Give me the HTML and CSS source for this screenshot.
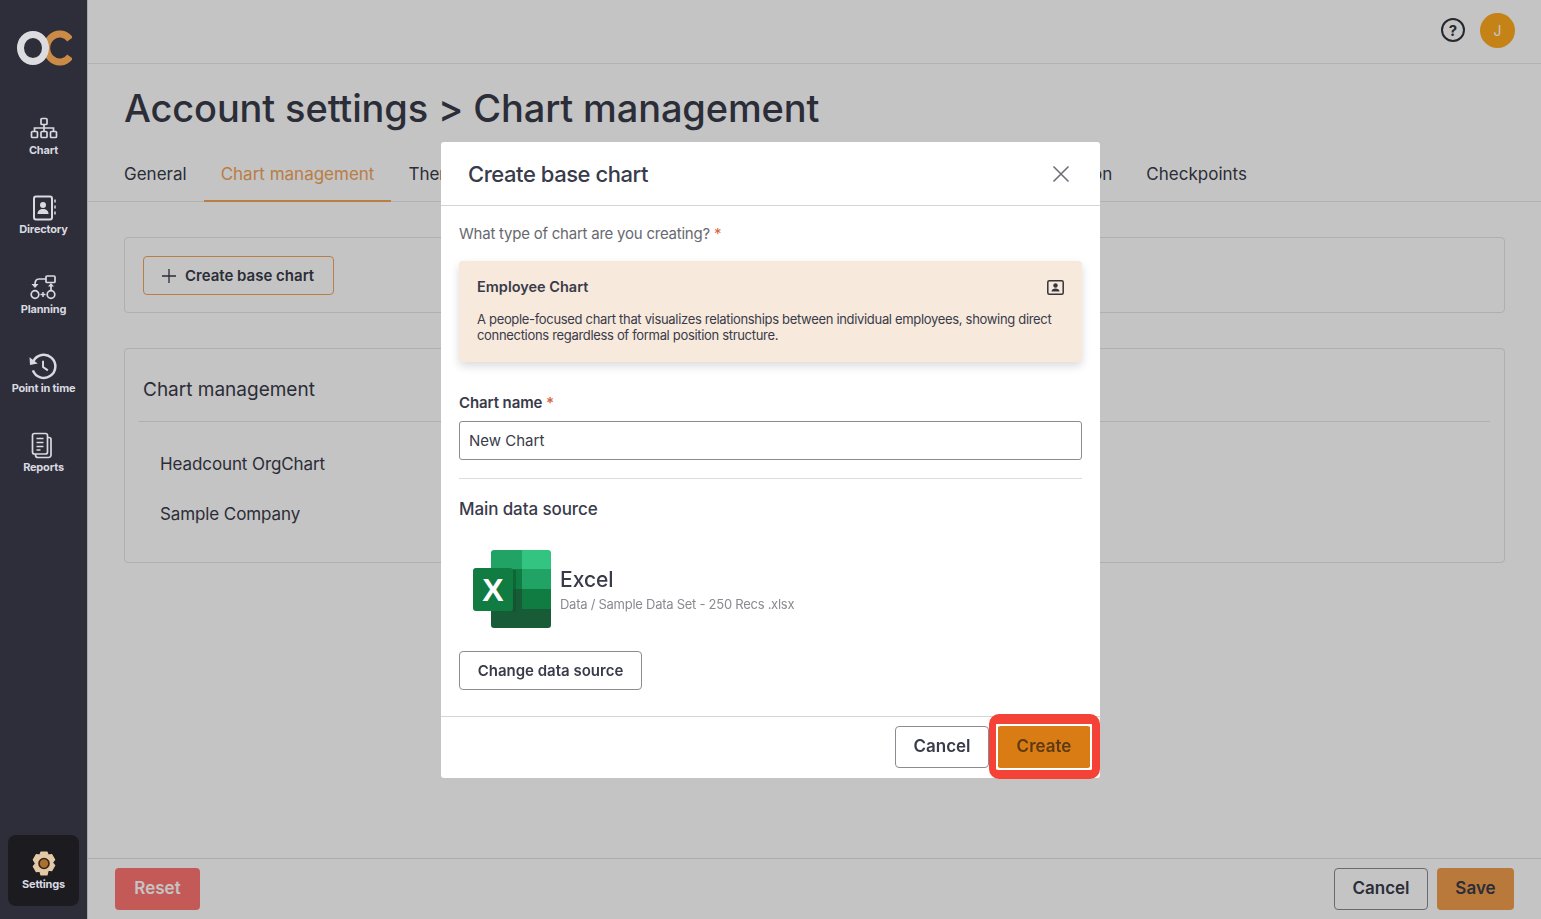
FILE: index.html
```html
<!DOCTYPE html>
<html lang="en">
<head>
    <meta charset="UTF-8">
    <meta name="viewport" content="width=device-width, initial-scale=1.0">
    <title>Chart management</title>
    <link rel="stylesheet" href="styles.css">
</head>
<body>

    <aside class="sidebar">
        <svg class="logo" width="56" height="36" viewBox="0 0 56 36">
            <path d="M54 9.500A13 14 0 1 0 54 26.500" fill="none" stroke="#c98b45" stroke-width="7"/>
            <ellipse cx="17" cy="18" rx="12.500" ry="13.500" fill="none" stroke="#dcdce0" stroke-width="7"/>
        </svg>

        <nav class="nav">
            <a class="nav-item">
                <svg width="28" height="24" viewBox="0 0 28 24" fill="none" stroke="currentColor" stroke-width="1.700">
                    <rect x="11" y="2" width="6" height="6" rx="1"/>
                    <rect x="1.500" y="15" width="6" height="6" rx="1"/>
                    <rect x="11" y="15" width="6" height="6" rx="1"/>
                    <rect x="20.500" y="15" width="6" height="6" rx="1"/>
                    <path d="M14 8v7M4.500 15v-3.500h19V15"/>
                </svg>
                <span>Chart</span>
            </a>
            <a class="nav-item">
                <svg width="28" height="26" viewBox="0 0 28 26" fill="none" stroke="currentColor" stroke-width="2">
                    <rect x="4" y="2" width="18" height="23" rx="2"/>
                    <circle cx="13" cy="10.500" r="3" fill="currentColor" stroke="none"/>
                    <path d="M7.500 19.500c0-3.500 2.500-5 5.500-5s5.500 1.500 5.500 5z" fill="currentColor" stroke="none"/>
                    <path d="M25 5v3M25 11v3M25 17v3" stroke-width="1.500"/>
                </svg>
                <span>Directory</span>
            </a>
            <a class="nav-item">
                <svg width="28" height="26" viewBox="0 0 28 26" fill="none" stroke="currentColor" stroke-width="1.700">
                    <rect x="16" y="1.500" width="9" height="6.500" rx="1"/>
                    <path d="M16 4.500H9C6 4.500 5 7 5 10"/>
                    <path d="M1.500 9.500 5 13.500 8.500 9.500z" fill="currentColor" stroke="none"/>
                    <circle cx="5" cy="20" r="3.800"/>
                    <circle cx="21" cy="20" r="3.800"/>
                    <path d="M10.500 20h5M13 17.500v5" stroke-width="1.500"/>
                    <path d="M21 16v-5"/>
                    <path d="M18 12l3-3.500 3 3.500z" fill="currentColor" stroke="none"/>
                </svg>
                <span>Planning</span>
            </a>
            <a class="nav-item">
                <svg width="30" height="28" viewBox="2 0 30 28" fill="none" stroke="currentColor" stroke-width="2.600">
                    <path d="M6 8.500A12 12 0 1 1 5.500 18"/>
                    <path d="M2 4.500 2.500 12.500 10.500 11z" fill="currentColor" stroke="none"/>
                    <path d="M16 8v6.500l5 3.500" stroke-width="2"/>
                </svg>
                <span>Point in time</span>
            </a>
            <a class="nav-item">
                <svg width="28" height="27" viewBox="2.500 0 28 27" fill="none" stroke="currentColor" stroke-width="1.700">
                    <path d="M5 3.500A2 2 0 0 1 7 1.500h11a2 2 0 0 1 2 2V20a2 2 0 0 1-2 2H7a2 2 0 0 1-2-2z"/>
                    <path d="M9 6.500h7M9 10.500h7M9 14.500h7M9 18h4"/>
                    <path d="M20 5.500h1.500a2 2 0 0 1 2 2V23a2.500 2.500 0 0 1-2.500 2.500H10.500A2.500 2.500 0 0 1 8 23v-1"/>
                </svg>
                <span>Reports</span>
            </a>
        </nav>

        <a class="nav-item nav-item-active">
            <svg width="26" height="26" viewBox="0 0 26 26">
                <path d="M10 1.500h6l1.200 3.100 3.500-.6 3 5.200-2.300 3 2.300 2.800-3 5.200-3.500-.6L16 24.500h-6l-1.200-3.900-3.500.6-3-5.200 2.300-2.800L2.300 9.200l3-5.200 3.500.6z" fill="#e3c9a6" stroke="#e3c9a6" stroke-width="1.200" stroke-linejoin="round"/>
                <circle cx="13" cy="13" r="5" fill="#a9702f" stroke="#33241a" stroke-width="1.600"/>
            </svg>
            <span>Settings</span>
        </a>
    </aside>

    <div class="main">
        <header class="topbar">
            <span class="help">?</span>
            <span class="avatar">J</span>
        </header>

        <h1 class="page-title">Account settings &gt; Chart management</h1>

        <div class="tabs">
            <a class="tab">General</a>
            <a class="tab tab-active">Chart management</a>
            <a class="tab">Themes</a>
            <a class="tab tab-far">Integration</a>
            <a class="tab">Checkpoints</a>
        </div>

        <div class="content">
            <section class="card card-action">
                <button class="btn btn-outline">
                    <svg width="16" height="16" viewBox="0 0 16 16" fill="none" stroke="currentColor" stroke-width="1.300"><path d="M8 1v14M1 8h14"/></svg>
                    Create base chart
                </button>
            </section>

            <section class="card card-list">
                <h2>Chart management</h2>
                <div class="chart-row">Headcount OrgChart</div>
                <div class="chart-row">Sample Company</div>
            </section>
        </div>

        <footer class="footer">
            <button class="btn btn-reset">Reset</button>
            <div class="footer-right">
                <button class="btn btn-plain">Cancel</button>
                <button class="btn btn-save">Save</button>
            </div>
        </footer>
    </div>

    <div class="overlay">
        <div class="modal">
            <div class="modal-header">
                <h3>Create base chart</h3>
                <svg width="18" height="18" viewBox="0 0 18 18" fill="none" stroke="#6f7076" stroke-width="1.600"><path d="M1.500 1.500l15 15M16.500 1.500l-15 15"/></svg>
            </div>

            <div class="modal-body">
                <p class="question">What type of chart are you creating? <span class="req">*</span></p>

                <div class="type-card">
                    <div class="type-title">
                        <span>Employee Chart</span>
                        <svg width="17" height="15" viewBox="0 0 17 15">
                            <rect x="0.800" y="0.800" width="15.400" height="13.400" rx="1.500" fill="none" stroke="#34353f" stroke-width="1.500"/>
                            <circle cx="8.500" cy="5.500" r="2.200" fill="#34353f"/>
                            <path d="M4.500 11.500c0-2 1.800-3 4-3s4 1 4 3z" fill="#34353f"/>
                        </svg>
                    </div>
                    <p>A people-focused chart that visualizes relationships between individual employees, showing direct connections regardless of formal position structure.</p>
                </div>

                <label class="field-label">Chart name <span class="req">*</span></label>
                <input class="field-input" type="text" value="New Chart">

                <hr class="divider">

                <h4 class="source-title">Main data source</h4>

                <div class="source">
                    <svg class="excel" width="78" height="78" viewBox="0 0 78 78">
                        <path d="M21 0h28v19H18V3a3 3 0 0 1 3-3z" fill="#21a366"/>
                        <path d="M49 0h26a3 3 0 0 1 3 3v16H49z" fill="#33c481"/>
                        <path d="M18 19h31v20H18z" fill="#107c41"/>
                        <path d="M49 19h29v20H49z" fill="#21a366"/>
                        <path d="M18 39h31v20H18z" fill="#185c37"/>
                        <path d="M49 39h29v20H49z" fill="#107c41"/>
                        <path d="M18 59h60v16a3 3 0 0 1-3 3H21a3 3 0 0 1-3-3z" fill="#185c37"/>
                        <rect x="40" y="20" width="3" height="42" fill="#0c4d2a" opacity=".5"/>
                        <rect x="0" y="18" width="40" height="43" rx="3" fill="#107c41"/>
                        <text class="excel-x" x="20" y="51" text-anchor="middle">X</text>
                    </svg>
                    <div class="source-text">
                        <div class="source-name">Excel</div>
                        <div class="source-path">Data / Sample Data Set - 250 Recs .xlsx</div>
                    </div>
                </div>

                <button class="btn btn-white">Change data source</button>
            </div>

            <div class="modal-footer">
                <button class="btn btn-cancel">Cancel</button>
                <button class="btn btn-create">Create<span class="highlight"></span></button>
            </div>
        </div>
    </div>

</body>
</html>
```

FILE: styles.css
```css
/* Base styling */
* {
    box-sizing: border-box;
}

body {
    font-family: 'Inter', 'Liberation Sans', sans-serif;
    background-color: #fff;
    color: #393b4a;
    margin: 0;
    height: 919px;
    overflow: hidden;
    display: flex;
}

/* Sidebar, sits above the dimming layer */
.sidebar {
    position: relative;
    z-index: 2;
    width: 88px;
    flex-shrink: 0;
    background-color: #2d2e3a;
    border-right: 1px solid #a9a9ab;
    display: flex;
    flex-direction: column;
    align-items: center;
    padding-top: 30px;
    padding-bottom: 13px;
}

.logo {
    display: block;
}

.nav {
    flex: 1;
    margin-top: 49px;
}

.nav-item {
    width: 71px;
    height: 79.25px;
    display: flex;
    flex-direction: column;
    align-items: center;
    color: #d9d9e0;
    font-size: 11px;
    font-weight: 700;
    letter-spacing: -0.2px;
    white-space: nowrap;
}

.nav-item span {
    margin-top: 1px;
}

.nav-item svg {
    height: 27px;
}

.nav-item-active {
    height: 71px;
    background-color: #1b1b20;
    border-radius: 8px;
    padding-top: 15px;
}

.nav-item-active span {
    margin-top: 0;
}

/* Main area */
.main {
    flex: 1;
    min-width: 0;
    display: flex;
    flex-direction: column;
}

.topbar {
    height: 64px;
    flex-shrink: 0;
    border-bottom: 1px solid #e8e8ea;
    display: flex;
    justify-content: flex-end;
    align-items: center;
    gap: 15px;
    padding: 0 26px 3px 0;
}

.help {
    width: 24px;
    height: 24px;
    border: 2.500px solid #33343e;
    border-radius: 50%;
    color: #33343e;
    font-size: 15px;
    font-weight: 700;
    display: flex;
    align-items: center;
    justify-content: center;
}

.avatar {
    width: 35px;
    height: 35px;
    border-radius: 50%;
    background-color: #ffa91f;
    color: #fff;
    font-size: 14px;
    display: flex;
    align-items: center;
    justify-content: center;
}

.page-title {
    font-size: 38px;
    font-weight: 500;
    letter-spacing: -0.14px;
    line-height: 46px;
    margin: 21px 0 0 36px;
}

.tabs {
    display: flex;
    margin-top: 24px;
    padding-left: 19px;
    height: 47px;
    flex-shrink: 0;
    border-bottom: 1px solid #e8e8ea;
}

.tab {
    padding: 9px 17px 0;
    font-size: 17px;
    white-space: nowrap;
    height: 47px;
}

.tab-active {
    color: #f0a45c;
    border-bottom: 2px solid #f0a45c;
}

/* the tabs between these two are covered by the dialog */
.tab-far {
    margin-left: 519px;
}

.content {
    flex: 1;
    padding: 35px 36px 0;
}

.card {
    border: 1px solid #e4e4e6;
    border-radius: 4px;
}

.card-action {
    height: 76px;
    padding: 18px;
}

.card-list {
    height: 215px;
    margin-top: 35px;
    padding: 0 14px;
}

.card-list h2 {
    font-size: 19px;
    font-weight: 400;
    line-height: 24px;
    margin: 0;
    padding: 29px 4px 19px;
    border-bottom: 1px solid #e4e4e6;
}

.chart-row {
    font-size: 17px;
    letter-spacing: -0.1px;
    line-height: 50px;
    padding-left: 21px;
}

.chart-row:first-of-type {
    margin-top: 17px;
}

/* Buttons */
.btn {
    font-family: inherit;
    font-size: 15px;
    font-weight: 600;
    color: #393b4a;
    border-radius: 4px;
    border: 1px solid #8b8b92;
    background-color: #fff;
    cursor: pointer;
    padding: 0;
}

.btn-outline {
    width: 191px;
    height: 39px;
    border-color: #f0a45c;
    display: flex;
    align-items: center;
    gap: 8px;
    padding-left: 17px;
}

.footer {
    height: 61px;
    flex-shrink: 0;
    border-top: 1px solid #e0e0e2;
    display: flex;
    justify-content: space-between;
    align-items: center;
    padding: 0 27px;
}

.footer-right {
    display: flex;
    gap: 9px;
}

.footer .btn {
    font-size: 17px;
    height: 42px;
    padding-bottom: 2px;
}

.btn-reset {
    width: 85px;
    border: none;
    background-color: #ff7573;
    color: #fff;
}

.btn-plain {
    width: 94px;
    background-color: #fff;
}

.btn-save {
    width: 77px;
    border: none;
    background-color: #f09e4d;
}

/* Modal */
.overlay {
    position: fixed;
    inset: 0;
    background-color: rgba(0, 0, 0, 0.23);
    display: flex;
    align-items: center;
    justify-content: center;
}

.modal {
    width: 659px;
    height: 636px;
    margin-top: 1px;
    background-color: #fff;
    border-radius: 3px;
    display: flex;
    flex-direction: column;
}

.modal-header {
    height: 64px;
    flex-shrink: 0;
    border-bottom: 1px solid #d5d5d8;
    display: flex;
    justify-content: space-between;
    align-items: center;
    padding: 0 30px 0 27px;
}

.modal-header h3 {
    font-size: 22px;
    font-weight: 500;
    letter-spacing: -0.45px;
    margin: 0;
}

.modal-body {
    flex: 1;
    padding: 0 18px;
}

.question {
    font-size: 15px;
    letter-spacing: -0.23px;
    line-height: 20px;
    color: #68696f;
    margin: 18px 0 0;
}

.req {
    color: #d9633e;
}

.type-card {
    height: 101px;
    margin-top: 17px;
    background-color: #f7e9db;
    border-radius: 4px;
    box-shadow: 0 4px 10px rgba(0, 0, 0, 0.15);
    padding: 17px 18px;
}

.type-title {
    display: flex;
    justify-content: space-between;
    align-items: center;
    font-size: 14.500px;
    font-weight: 600;
    line-height: 18px;
}

.type-card p {
    font-size: 13px;
    letter-spacing: -0.32px;
    line-height: 16px;
    margin: 15px 0 0;
}

.field-label {
    display: block;
    font-size: 15px;
    font-weight: 600;
    letter-spacing: -0.1px;
    line-height: 20px;
    margin-top: 31px;
}

.field-input {
    display: block;
    width: 100%;
    height: 39px;
    margin-top: 8px;
    border: 1px solid #8b8b92;
    border-radius: 3px;
    padding: 0 9px;
    font-family: inherit;
    font-size: 15px;
    color: #393b4a;
}

.divider {
    border: none;
    border-top: 1px solid #dcdcdf;
    margin: 18px 0 0;
}

.source-title {
    font-size: 17px;
    font-weight: 500;
    letter-spacing: -0.1px;
    line-height: 22px;
    margin: 19px 0 0;
}

.source {
    display: flex;
    align-items: center;
    gap: 9px;
    margin-top: 30px;
    padding-left: 14px;
}

.excel-x {
    font-family: 'Liberation Sans', sans-serif;
    font-size: 32px;
    font-weight: 700;
    fill: #fff;
}

.source-name {
    font-size: 21px;
    font-weight: 500;
    line-height: 26px;
    margin-top: 1px;
}

.source-path {
    font-size: 13px;
    letter-spacing: -0.26px;
    color: #8a8a90;
    line-height: 16px;
    margin-top: 3px;
}

.btn-white {
    width: 183px;
    height: 39px;
    margin-top: 23px;
}

.modal-footer {
    height: 62px;
    flex-shrink: 0;
    border-top: 1px solid #d5d5d8;
    display: flex;
    justify-content: flex-end;
    align-items: flex-start;
    padding: 9px 9px 0 0;
    gap: 8px;
}

.modal-footer .btn {
    font-size: 17px;
    height: 42px;
    width: 94px;
    padding-bottom: 2px;
}

.btn-create {
    position: relative;
    border: none;
    background-color: #d97c14;
}

.modal-footer .btn-create {
    color: #5e3a14;
}

/* red annotation box round the button */
.highlight {
    position: absolute;
    top: -12px;
    right: -9px;
    bottom: -11px;
    left: -8px;
    border: solid #f44336;
    border-width: 10px 8px 9px 7px;
    border-radius: 10px;
    box-shadow: inset 0 0 0 2px #fff;
    pointer-events: none;
}
```
